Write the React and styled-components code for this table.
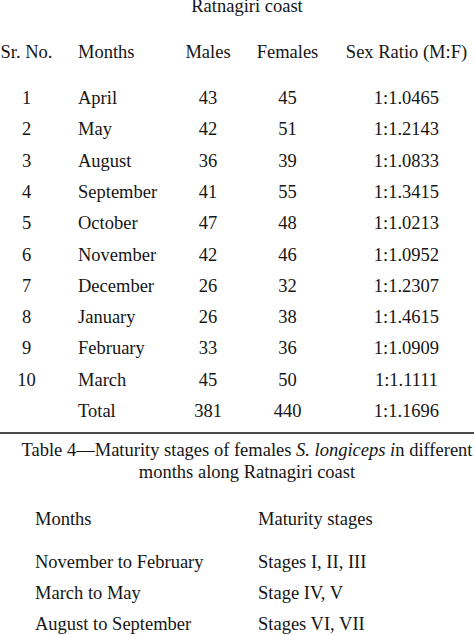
import React from "react";
import styled, { createGlobalStyle } from "styled-components";

const Global = createGlobalStyle`
  html, body { margin: 0; padding: 0; background: #fff; }
  body {
    font-family: "Liberation Serif", "Times New Roman", serif;
    font-size: 18.5px;
    color: #151515;
  }
`;

const Page = styled.div`
  width: 474px;
  height: 635px;
  overflow: hidden;
  display: flex;
  flex-direction: column;
`;

const Caption = styled.div`
  padding-left: 20px;
  text-align: center;
  line-height: ${(p) => p.$lh || 22}px;
  margin-top: ${(p) => p.$mt || 0}px;
`;

const Grid = styled.div`
  display: grid;
  grid-template-columns: 53px 115px 80px 79px 1fr;
  margin-top: ${(p) => p.$mt || 0}px;
`;

const Cell = styled.div`
  line-height: 31.3px;
  white-space: nowrap;
  text-align: ${(p) => (p.$left ? "left" : "center")};
  padding-left: ${(p) => p.$pl || 0}px;
`;

const HeaderGap = styled.div`
  grid-column: 1 / -1;
  height: 14.7px;
`;

const Rule = styled.div`
  margin-top: 4.6px;
  width: 100%;
  height: 2px;
  flex-shrink: 0;
  background: #4a4a4a;
`;

const Grid2 = styled.div`
  display: grid;
  grid-template-columns: 223px 1fr;
  padding-left: 35px;
  margin-top: ${(p) => p.$mt || 0}px;
`;

const Cell2 = styled.div`
  line-height: 31px;
  white-space: nowrap;
`;

const Ital = styled.i`
  font-style: italic;
`;

const rows = [
  ["1", "April", "43", "45", "1:1.0465"],
  ["2", "May", "42", "51", "1:1.2143"],
  ["3", "August", "36", "39", "1:1.0833"],
  ["4", "September", "41", "55", "1:1.3415"],
  ["5", "October", "47", "48", "1:1.0213"],
  ["6", "November", "42", "46", "1:1.0952"],
  ["7", "December", "26", "32", "1:1.2307"],
  ["8", "January", "26", "38", "1:1.4615"],
  ["9", "February", "33", "36", "1:1.0909"],
  ["10", "March", "45", "50", "1:1.1111"],
  ["", "Total", "381", "440", "1:1.1696"],
];

const rows2 = [
  ["November to February", "Stages I, II, III"],
  ["March to May", "Stage IV, V"],
  ["August to September", "Stages VI, VII"],
];

function Row({ r }) {
  return (
    <>
      <Cell>{r[0]}</Cell>
      <Cell $left $pl={25}>{r[1]}</Cell>
      <Cell>{r[2]}</Cell>
      <Cell>{r[3]}</Cell>
      <Cell $pl={12}>{r[4]}</Cell>
    </>
  );
}

export default function App() {
  return (
    <Page>
      <Global />
      <Caption $lh={21} $mt={-3.6}>Ratnagiri coast</Caption>
      <Grid $mt={19.7}>
        <Row r={["Sr. No.", "Months", "Males", "Females", "Sex Ratio (M:F)"]} />
        <HeaderGap />
        {rows.map((r, i) => (
          <Row key={i} r={r} />
        ))}
      </Grid>
      <Rule />
      <Caption $mt={4.8}>
        Table 4—Maturity stages of females <Ital>S. longiceps i</Ital>n different
        <br />
        months along Ratnagiri coast
      </Caption>
      <Grid2 $mt={21.5}>
        <Cell2>Months</Cell2>
        <Cell2>Maturity stages</Cell2>
      </Grid2>
      <Grid2 $mt={12}>
        {rows2.map((r, i) => (
          <React.Fragment key={i}>
            <Cell2>{r[0]}</Cell2>
            <Cell2>{r[1]}</Cell2>
          </React.Fragment>
        ))}
      </Grid2>
    </Page>
  );
}
